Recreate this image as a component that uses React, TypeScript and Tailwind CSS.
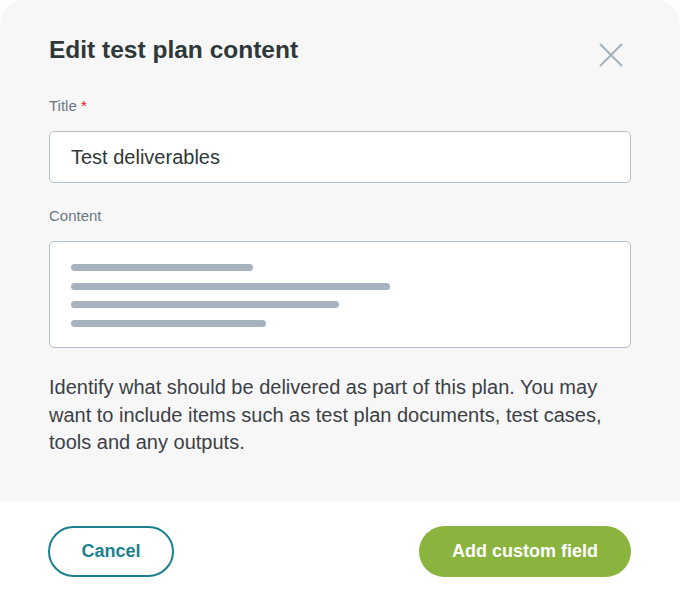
import React from 'react';

const font = { fontFamily: '"Liberation Sans", Arial, sans-serif' };

export default function App() {
  const bars = ['w-[182px]', 'w-[319px]', 'w-[268px]', 'w-[195px]'];

  return (
    <div className="w-[680px] h-[600px] bg-white flex flex-col" style={font}>
      {/* Body */}
      <div className="h-[502px] bg-[#f7f7f7] rounded-t-[24px] px-[49px] pt-[36px]">
        <div className="flex items-start justify-between">
          <h2 className="text-[24.5px] leading-[28px] font-bold text-[#2e3839]">Edit test plan content</h2>
          <button className="mt-[7px] mr-[8px] text-[#a3b1bf]" aria-label="Close">
            <svg width="24" height="24" viewBox="0 0 24 24" fill="none" stroke="currentColor" strokeWidth="2">
              <path d="M1 1L23 23M23 1L1 23" />
            </svg>
          </button>
        </div>

        <label className="block mt-[29px] text-[15px] leading-[20px] text-[#6b7785]">
          Title <span className="text-[#e02020]">*</span>
        </label>
        <div className="mt-[15px] h-[52px] bg-white border border-[#b3bfcb] rounded-[5px] flex items-center px-[21px] text-[20px] text-[#2e3839]">
          Test deliverables
        </div>

        <label className="block mt-[23px] text-[15px] leading-[20px] text-[#6b7785]">Content</label>
        <div className="mt-[15px] h-[107px] bg-white border border-[#b3bfcb] rounded-[5px] px-[21px] pt-[22px] flex flex-col gap-[11.5px]">
          {bars.map((w, i) => (
            <div key={i} className={`${w} h-[7px] rounded-full bg-[#a6b2be]`} />
          ))}
        </div>

        <p className="mt-[26px] text-[20px] leading-[27.5px] text-[#3b4146]">
          Identify what should be delivered as part of this plan. You may want to include items such as test plan documents, test cases, tools and any outputs.
        </p>
      </div>

      {/* Footer */}
      <div className="h-[98px] flex items-center justify-between px-[48px]">
        <button className="w-[126px] h-[51px] rounded-full border-2 border-[#1b7f8e] text-[#1b7f8e] text-[18px] font-bold">
          Cancel
        </button>
        <button className="w-[212px] h-[51px] mr-[1px] rounded-full bg-[#8bb43e] text-white text-[18px] font-bold">
          Add custom field
        </button>
      </div>
    </div>
  );
}
